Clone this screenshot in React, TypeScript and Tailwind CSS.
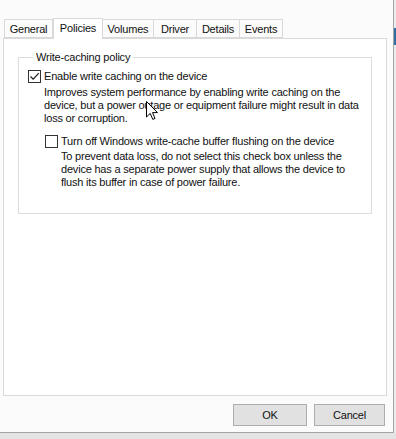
import React from 'react';

const tabs = [
  { label: 'General', w: 49 },
  { label: 'Policies', w: 50 },
  { label: 'Volumes', w: 51 },
  { label: 'Driver', w: 43 },
  { label: 'Details', w: 43 },
  { label: 'Events', w: 43 },
];

function CheckBox({ checked }: { checked?: boolean }) {
  return (
    <div className="w-[13px] h-[13px] shrink-0 border border-[#333333] bg-white flex items-center justify-center">
      {checked && (
        <svg width="11" height="11" viewBox="0 0 11 11" fill="none">
          <path d="M1.5 5.5 L4.2 8.2 L9.8 2.2" stroke="#1a1a1a" strokeWidth="1.2" />
        </svg>
      )}
    </div>
  );
}

function Cursor() {
  return (
    <svg
      className="absolute left-[146px] top-[101px]"
      width="13"
      height="20"
      viewBox="0 0 13 20"
    >
      <path
        d="M0.5 0.5 L0.5 16 L4.2 12.4 L6.8 18.4 L9 17.4 L6.5 11.6 L11.5 11.6 Z"
        fill="#ffffff"
        stroke="#000000"
        strokeWidth="1"
        strokeLinejoin="miter"
      />
    </svg>
  );
}

export default function App() {
  return (
    <div
      className="relative w-[396px] h-[439px] overflow-hidden bg-[#e4e4e4] text-[11px] tracking-[-0.2px] text-[#111] whitespace-nowrap"
      style={{ fontFamily: '"Liberation Sans", Arial, sans-serif' }}
    >
      <div className="flex">
        {/* dialog */}
        <div className="w-[394px] h-[433px] bg-[#fbfbfb] border-r border-b border-[#a5a5a5] flex flex-col">
          <div className="h-[17px]" />

          {/* tab strip */}
          <div className="flex items-end pl-[4px] h-[21px] relative z-10">
            {tabs.map((t, i) => {
              const active = t.label === 'Policies';
              return (
                <div
                  key={t.label}
                  style={{ width: t.w }}
                  className={
                    active
                      ? 'h-[21px] bg-white border border-b-0 border-[#d9d9d9] flex justify-center pt-[3px] leading-[13px] -mb-px'
                      : `h-[19px] bg-[#fbfbfb] border-t border-r border-b border-[#d9d9d9] flex justify-center pt-[3px] leading-[13px] ${i === 0 ? 'border-l' : ''}`
                  }
                >
                  {t.label}
                </div>
              );
            })}
          </div>

          {/* tab page */}
          <div className="ml-[3px] w-[384px] h-[358px] bg-white border border-[#d9d9d9] px-[14px]">
            <fieldset className="mt-[12px] border border-[#dcdcdc] pl-[9px] pr-2 pb-[24px]">
              <legend className="ml-[5px] px-[3px] leading-[13px]">Write-caching policy</legend>

              <div className="mt-[6px] flex items-center gap-[3px] leading-[13px]">
                <CheckBox checked />
                <span>Enable write caching on the device</span>
              </div>
              <div className="mt-[3px] pl-[16px] leading-[13px]">
                Improves system performance by enabling write caching on the
                <br />
                device, but a power outage or equipment failure might result in data
                <br />
                loss or corruption.
              </div>

              <div className="mt-[10px] ml-[17px] flex items-center gap-[3px] leading-[13px]">
                <CheckBox />
                <span>Turn off Windows write-cache buffer flushing on the device</span>
              </div>
              <div className="mt-[2px] pl-[33px] leading-[13px]">
                To prevent data loss, do not select this check box unless the
                <br />
                device has a separate power supply that allows the device to
                <br />
                flush its buffer in case of power failure.
              </div>
            </fieldset>
          </div>

          {/* buttons */}
          <div className="mt-[8px] flex justify-end gap-[7px] pr-[8px]">
            <button className="w-[74px] h-[22px] bg-[#e1e1e1] border border-[#adadad] leading-[13px]">
              OK
            </button>
            <button className="w-[71px] h-[22px] bg-[#e1e1e1] border border-[#adadad] leading-[13px]">
              Cancel
            </button>
          </div>
        </div>

        {/* right edge strip */}
        <div className="w-[2px] h-[433px] bg-[#ececec] flex flex-col">
          <div className="h-[28px]" />
          <div className="h-[17px] bg-[#2f6fa6]" />
        </div>
      </div>

      <Cursor />
    </div>
  );
}
